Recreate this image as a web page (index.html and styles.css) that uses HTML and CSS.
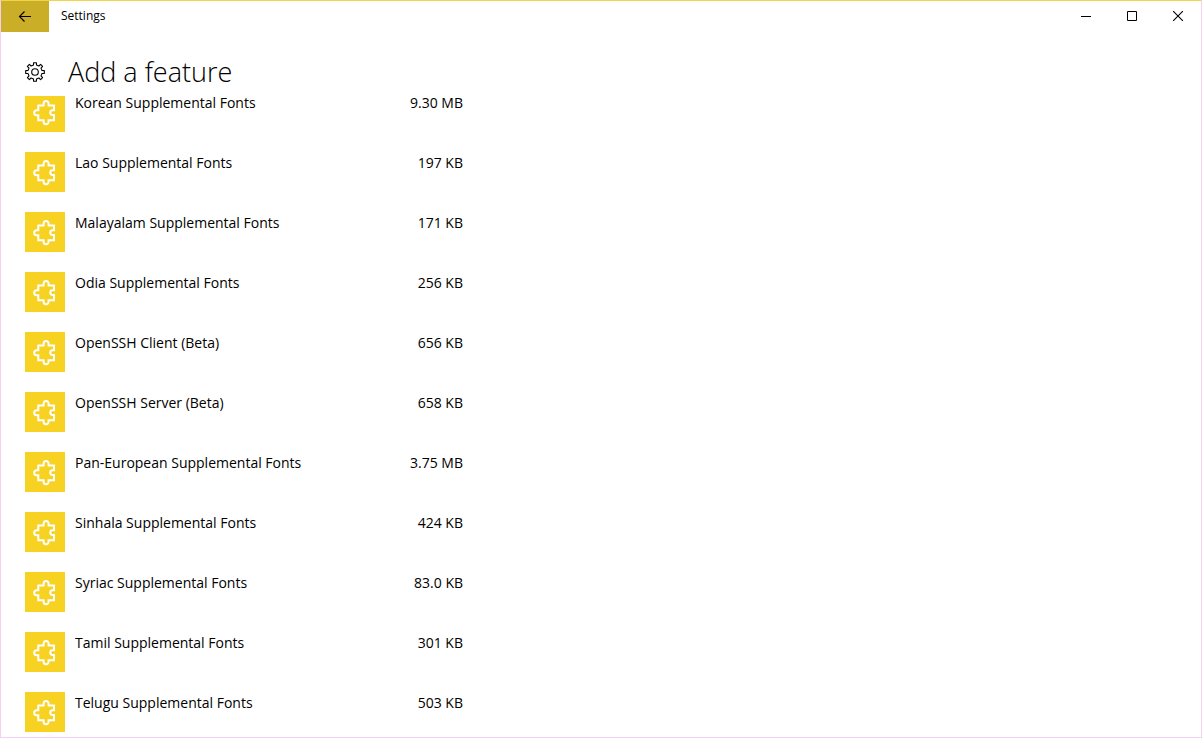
FILE: index.html
```html
<!DOCTYPE html>
<html lang="en">
<head>
<meta charset="utf-8">
<title>Settings</title>
<link rel="stylesheet" href="styles.css">
</head>
<body>
<svg class="symbols" aria-hidden="true">
  <symbol id="puzzle" viewBox="0 0 40 40">
    <path d="M13.3 13.5H18.6V11.5A2.5 2.5 0 0 1 23.6 11.5V13.5H29V18.2H27.6A2.4 2.4 0 0 0 27.6 23H29V28.2H23.6V29.7A2.5 2.5 0 0 1 18.6 29.7V28.2H13.3V23.2H11.7A2.5 2.5 0 0 1 11.7 18.2H13.3Z" fill="none" stroke="#fff" stroke-width="2"/>
  </symbol>
</svg>
<div class="window">
  <header class="titlebar">
    <button class="back" aria-label="Back">
      <svg width="14" height="12" viewBox="0 0 14 12"><path d="M13 5.5H1.5M6.5 .5L1.5 5.5L6.5 10.5" fill="none" stroke="#000" stroke-width="1.1"/></svg>
    </button>
    <span class="app-name">Settings</span>
    <div class="controls">
      <button class="control" aria-label="Minimize"><svg width="10" height="10" viewBox="0 0 10 10"><path d="M0 5.5H10" stroke="#000"/></svg></button>
      <button class="control" aria-label="Maximize"><svg width="10" height="10" viewBox="0 0 10 10"><path d="M.5 .5H9.5V9.5H.5Z" fill="none" stroke="#000"/></svg></button>
      <button class="control" aria-label="Close"><svg width="10" height="10" viewBox="0 0 10 10"><path d="M0 0L10 10M10 0L0 10" stroke="#000" stroke-width="1.1"/></svg></button>
    </div>
  </header>
  <div class="heading">
    <svg class="gear" width="20" height="20" viewBox="0 0 20 20" fill="none" stroke="#000" stroke-width="1.1" stroke-linejoin="round">
      <path d="M8.5 3L8.6 .7H11.4L11.5 3L13.9 4L15.6 2.4L17.6 4.4L16 6.1L17 8.5L19.3 8.6V11.4L17 11.5L16 13.9L17.6 15.6L15.6 17.6L13.9 16L11.5 17L11.4 19.3H8.6L8.5 17L6.1 16L4.4 17.6L2.4 15.6L4 13.9L3 11.5L.7 11.4V8.6L3 8.5L4 6.1L2.4 4.4L4.4 2.4L6.1 4Z"/>
      <circle cx="10" cy="10" r="3.3"/>
    </svg>
    <h1>Add a feature</h1>
  </div>
  <main class="viewport">
    <ul class="features">
      <li><svg class="tile"><use href="#puzzle"/></svg><span class="name">Korean Supplemental Fonts</span><span class="size">9.30 MB</span></li>
      <li><svg class="tile"><use href="#puzzle"/></svg><span class="name">Lao Supplemental Fonts</span><span class="size">197 KB</span></li>
      <li><svg class="tile"><use href="#puzzle"/></svg><span class="name">Malayalam Supplemental Fonts</span><span class="size">171 KB</span></li>
      <li><svg class="tile"><use href="#puzzle"/></svg><span class="name">Odia Supplemental Fonts</span><span class="size">256 KB</span></li>
      <li><svg class="tile"><use href="#puzzle"/></svg><span class="name">OpenSSH Client (Beta)</span><span class="size">656 KB</span></li>
      <li><svg class="tile"><use href="#puzzle"/></svg><span class="name">OpenSSH Server (Beta)</span><span class="size">658 KB</span></li>
      <li><svg class="tile"><use href="#puzzle"/></svg><span class="name">Pan-European Supplemental Fonts</span><span class="size">3.75 MB</span></li>
      <li><svg class="tile"><use href="#puzzle"/></svg><span class="name">Sinhala Supplemental Fonts</span><span class="size">424 KB</span></li>
      <li><svg class="tile"><use href="#puzzle"/></svg><span class="name">Syriac Supplemental Fonts</span><span class="size">83.0 KB</span></li>
      <li><svg class="tile"><use href="#puzzle"/></svg><span class="name">Tamil Supplemental Fonts</span><span class="size">301 KB</span></li>
      <li><svg class="tile"><use href="#puzzle"/></svg><span class="name">Telugu Supplemental Fonts</span><span class="size">503 KB</span></li>
    </ul>
  </main>
</div>
</body>
</html>
```
FILE: styles.css
```css
* { box-sizing: border-box; }
body {
  margin: 0;
  background: #fff;
  color: #000;
  font-family: "Open Sans", "Noto Sans", sans-serif;
}
.symbols { display: none; }
.window {
  display: flex;
  flex-direction: column;
  height: 100vh;
  border: 1px solid #f5cff5;
  border-top-color: #f3d34a;
  overflow: hidden;
}
.titlebar {
  display: flex;
  align-items: stretch;
  flex: none;
  height: 31px;
}
button {
  display: flex;
  align-items: center;
  justify-content: center;
  padding: 0;
  border: 0;
  background: none;
}
.back { width: 48px; background: #caae27; }
.app-name {
  padding-left: 12px;
  font-size: 12px;
  line-height: 30px;
}
.controls { display: flex; height: 30px; margin-left: auto; }
.control { width: 46px; }
.heading {
  display: flex;
  align-items: center;
  flex: none;
  gap: 23px;
  height: 60px;
  padding: 20px 24px 0;
}
h1 {
  margin: 0;
  font-size: 27px;
  font-weight: 300;
  line-height: 40px;
}
.viewport {
  flex: 1;
  min-height: 0;
  padding: 0 24px;
  overflow: hidden;
}
.features {
  display: grid;
  grid-auto-rows: 60px;
  max-width: 438px;
  margin: 0;
  padding: 0;
  list-style: none;
}
.features li {
  display: flex;
  align-items: flex-start;
  gap: 10px;
  font-size: 14px;
  line-height: 22px;
}
.tile {
  flex: none;
  width: 40px;
  height: 40px;
  background: #f7d222;
}
/* The first tile is scrolled partly under the heading. */
.features li:first-child .tile { clip-path: inset(4px 0 0); }
.size { margin-left: auto; }
```
